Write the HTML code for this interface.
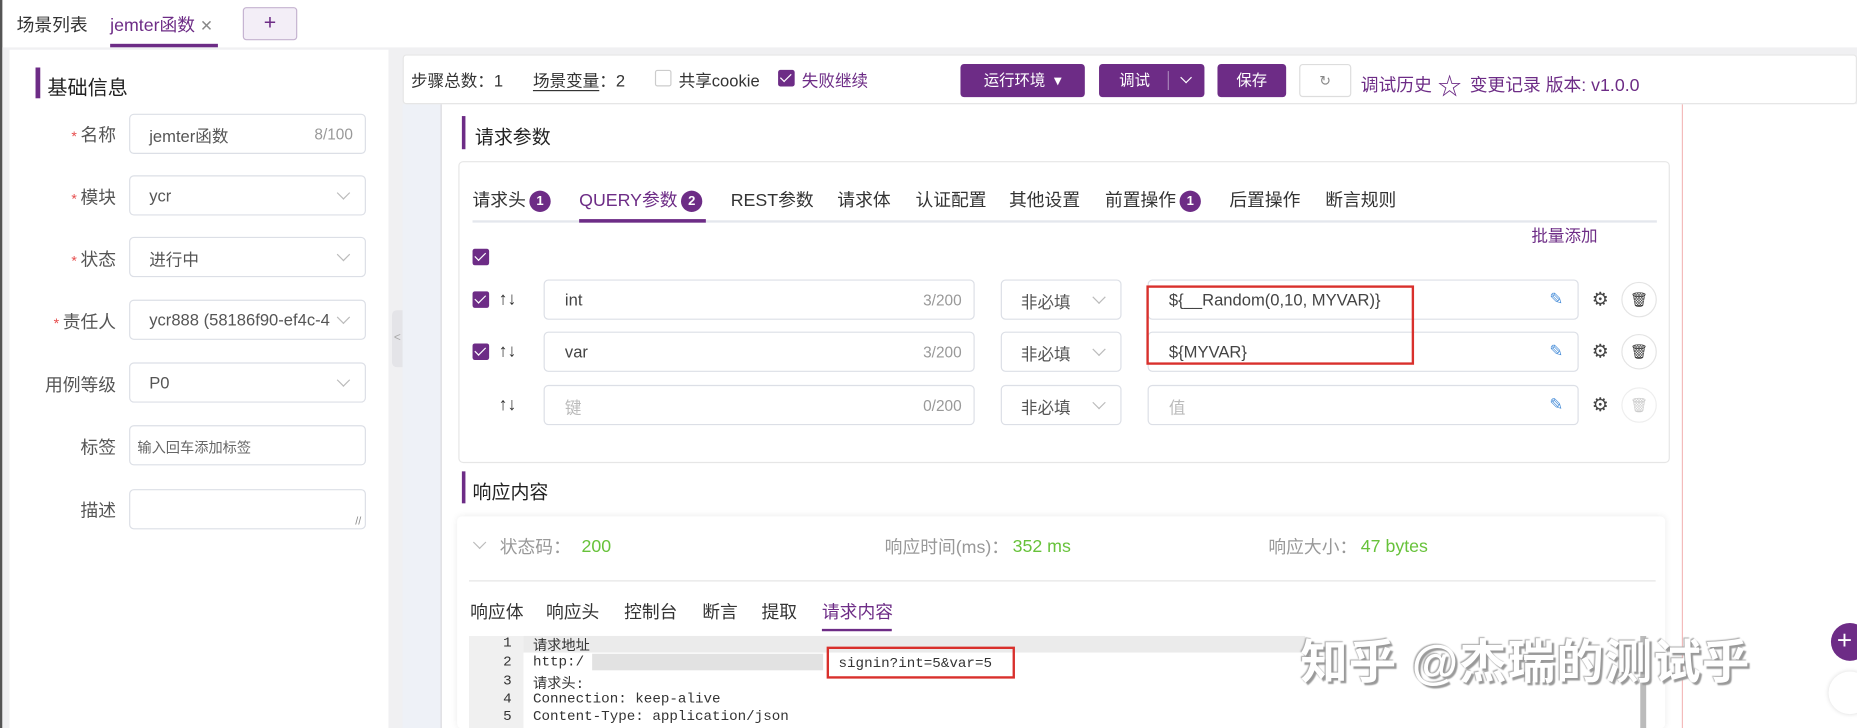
<!DOCTYPE html>
<html><head><meta charset="utf-8"><style>
*{box-sizing:border-box;margin:0;padding:0}
html,body{width:1857px;height:728px;overflow:hidden;background:#fff}
body{font-family:"Liberation Sans","Noto Sans CJK SC",sans-serif;color:#333}
#s{position:absolute;left:0;top:0;width:1568px;height:615px;transform:scale(1.18431);transform-origin:0 0;font-size:14px;overflow:hidden}
.a{position:absolute;white-space:nowrap}
.inp{position:absolute;border:1px solid #dcdfe6;border-radius:4px;background:#fff;height:34px}
.lbl{position:absolute;width:90px;text-align:right;left:8px;color:#555;font-size:15px}
.lbl b{color:#e64b4b;font-weight:normal;font-size:12px;margin-right:3px}
.chev{position:absolute;width:8px;height:8px;border-right:1px solid #bbb;border-bottom:1px solid #bbb;transform:rotate(45deg)}
.cb{position:absolute;width:14px;height:14px;border-radius:2px;background:#6d2c86}
.cb:after{content:"";position:absolute;left:4px;top:1px;width:4px;height:8px;border-right:1.5px solid #fff;border-bottom:1.5px solid #fff;transform:rotate(45deg)}
.btn{position:absolute;background:#6d2c86;color:#fff;border-radius:3px;height:28px;top:54px;font-size:13px;line-height:28px;text-align:center}
.badge{display:inline-block;width:18px;height:18px;border-radius:9px;background:#6d2c86;color:#fff;font-size:11px;line-height:18px;text-align:center;font-weight:bold;vertical-align:1px;margin-left:3px}
.tab{position:absolute;top:158px;font-size:15px;color:#333}
.code{position:absolute;font-family:"Liberation Mono","Noto Sans CJK SC",monospace;font-size:12px;left:450px}
.ln{position:absolute;left:396px;width:36px;text-align:right;font-family:"Liberation Mono",monospace;font-size:12px;color:#333}
</style></head><body><div id="s">
<div class="a" style="left:0;top:0;width:2px;height:615px;background:#555"></div>
<div class="a" style="left:14px;top:10px;font-size:15px;color:#333">场景列表</div>
<div class="a" style="left:93px;top:10px;font-size:15px;color:#6d2c86">jemter函数 <span style="color:#888;font-size:13px">✕</span></div>
<div class="a" style="left:93px;top:37px;width:91px;height:3px;background:#6d2c86"></div>
<div class="a" style="left:205px;top:6px;width:46px;height:28px;border:1px solid #c5b3d0;background:#f3eef7;border-radius:3px;text-align:center;line-height:25px;font-size:18px;color:#6d2c86">+</div>
<div class="a" style="left:2px;top:40px;width:1566px;height:575px;background:#f0f0f2"></div>
<div class="a" style="left:8px;top:42px;width:320px;height:573px;background:#fff"></div>
<div class="a" style="left:30px;top:57px;width:4px;height:26px;background:#6d2c86"></div>
<div class="a" style="left:40px;top:60px;font-size:17px;color:#222">基础信息</div>
<div class="lbl" style="top:103px"><b>*</b>名称</div>
<div class="inp" style="left:109px;top:96px;width:200px"><span class="a" style="left:16px;top:8px;color:#555">jemter函数</span><span class="a" style="right:10px;top:9px;color:#999;font-size:13px">8/100</span></div>
<div class="lbl" style="top:156px"><b>*</b>模块</div>
<div class="inp" style="left:109px;top:148px;width:200px"><span class="a" style="left:16px;top:8px;color:#555">ycr</span><i class="chev" style="right:14px;top:10px"></i></div>
<div class="lbl" style="top:208px"><b>*</b>状态</div>
<div class="inp" style="left:109px;top:200px;width:200px"><span class="a" style="left:16px;top:8px;color:#555">进行中</span><i class="chev" style="right:14px;top:10px"></i></div>
<div class="lbl" style="top:261px"><b>*</b>责任人</div>
<div class="inp" style="left:109px;top:253px;width:200px"><span class="a" style="left:16px;top:8px;color:#555">ycr888 (58186f90-ef4c-4</span><i class="chev" style="right:14px;top:10px"></i></div>
<div class="lbl" style="top:314px">用例等级</div>
<div class="inp" style="left:109px;top:306px;width:200px"><span class="a" style="left:16px;top:8px;color:#555">P0</span><i class="chev" style="right:14px;top:10px"></i></div>
<div class="lbl" style="top:367px">标签</div>
<div class="inp" style="left:109px;top:359px;width:200px"><span class="a" style="left:6px;top:9px;color:#666;font-size:12px">输入回车添加标签</span></div>
<div class="lbl" style="top:420px">描述</div>
<div class="inp" style="left:109px;top:413px;width:200px"><span class="a" style="right:3px;bottom:1px;color:#888;font-size:9px">//</span></div>
<div class="a" style="left:331px;top:262px;width:9px;height:48px;background:#e4e4e8;border-radius:4px 0 0 4px;color:#aaa;font-size:10px;line-height:48px;text-align:center">&lt;</div>
<div class="a" style="left:340px;top:88px;width:1228px;height:527px;background:#eef1f7"></div>
<div class="a" style="left:1420px;top:88px;width:148px;height:527px;background:#fff;border-left:1px solid #f3b4b4"></div>
<div class="a" style="left:372px;top:88px;width:1048px;height:527px;background:#fff;border-left:1px solid #d8d8dc"></div>
<div class="a" style="left:340px;top:46px;width:1228px;height:42px;background:#fff;border:1px solid #e6e6e6;border-radius:3px"></div>
<div class="a" style="left:347px;top:58px;font-size:14px">步骤总数：1</div>
<div class="a" style="left:450px;top:58px;font-size:14px"><span style="border-bottom:1px solid #333">场景变量</span>：2</div>
<div class="a" style="left:553px;top:59px;width:14px;height:14px;border:1px solid #ccc;border-radius:2px"></div>
<div class="a" style="left:573px;top:58px">共享cookie</div>
<div class="cb" style="left:657px;top:59px"></div>
<div class="a" style="left:677px;top:58px;color:#6d2c86">失败继续</div>
<div class="btn" style="left:811px;width:105px">运行环境 &nbsp;▾</div>
<div class="btn" style="left:928px;width:89px;text-align:left;padding-left:17px">调试<span style="position:absolute;left:58px;top:6px;height:16px;border-left:1px solid #a884b8"></span><i class="chev" style="left:70px;top:8px;border-color:#fff;width:7px;height:7px"></i></div>
<div class="btn" style="left:1028px;width:58px">保存</div>
<div class="a" style="left:1097px;top:54px;width:44px;height:28px;border:1px solid #ddd;border-radius:3px;text-align:center;line-height:26px;color:#888;font-size:12px">↻</div>
<div class="a" style="left:1149px;top:61px;font-size:15px;color:#6d2c86">调试历史</div>
<div class="a" style="left:1214px;top:57px;font-size:20px;color:#6d2c86">☆</div>
<div class="a" style="left:1241px;top:61px;font-size:15px;color:#6d2c86">变更记录 版本: v1.0.0</div>
<div class="a" style="left:390px;top:98px;width:3px;height:28px;background:#6d2c86"></div>
<div class="a" style="left:401px;top:102px;font-size:16px;color:#222">请求参数</div>
<div class="a" style="left:387px;top:136px;width:1023px;height:255px;border:1px solid #e6e6e6;border-radius:4px"></div>
<div class="tab" style="left:399px">请求头<span class="badge">1</span></div>
<div class="tab" style="left:489px;color:#6d2c86">QUERY参数<span class="badge">2</span></div>
<div class="tab" style="left:617px">REST参数</div>
<div class="tab" style="left:707px">请求体</div>
<div class="tab" style="left:773px">认证配置</div>
<div class="tab" style="left:852px">其他设置</div>
<div class="tab" style="left:933px">前置操作<span class="badge">1</span></div>
<div class="tab" style="left:1038px">后置操作</div>
<div class="tab" style="left:1119px">断言规则</div>
<div class="a" style="left:399px;top:186px;width:1000px;height:2px;background:#e4e7ed"></div>
<div class="a" style="left:489px;top:185px;width:107px;height:3px;background:#6d2c86"></div>
<div class="a" style="left:1293px;top:189px;color:#6d2c86;font-size:14px">批量添加</div>
<div class="cb" style="left:399px;top:210px"></div>
<div class="cb" style="left:399px;top:246px"></div>
<div class="a" style="left:421px;top:244px;font-size:15px">↑↓</div>
<div class="inp" style="left:459px;top:236px;width:364px"><span class="a" style="left:17px;top:8px;color:#444">int</span><span class="a" style="right:10px;top:9px;color:#999;font-size:13px">3/200</span></div>
<div class="inp" style="left:845px;top:236px;width:102px"><span class="a" style="left:16px;top:8px;color:#555">非必填</span><i class="chev" style="right:14px;top:10px"></i></div>
<div class="inp" style="left:969px;top:236px;width:364px"><span class="a" style="left:17px;top:8px;color:#444">${__Random(0,10, MYVAR)}</span><span class="a" style="right:12px;top:7px;color:#4a8fd9;font-size:14px">✎</span></div>
<div class="a" style="left:1344px;top:243px;font-size:16px;color:#444">⚙</div>
<div class="a" style="left:1369px;top:238px;width:30px;height:30px;border:1px solid #e4e4e4;border-radius:15px;text-align:center;line-height:28px;font-size:12px;color:#333">🗑</div>
<div class="cb" style="left:399px;top:290px"></div>
<div class="a" style="left:421px;top:288px;font-size:15px">↑↓</div>
<div class="inp" style="left:459px;top:280px;width:364px"><span class="a" style="left:17px;top:8px;color:#444">var</span><span class="a" style="right:10px;top:9px;color:#999;font-size:13px">3/200</span></div>
<div class="inp" style="left:845px;top:280px;width:102px"><span class="a" style="left:16px;top:8px;color:#555">非必填</span><i class="chev" style="right:14px;top:10px"></i></div>
<div class="inp" style="left:969px;top:280px;width:364px"><span class="a" style="left:17px;top:8px;color:#444">${MYVAR}</span><span class="a" style="right:12px;top:7px;color:#4a8fd9;font-size:14px">✎</span></div>
<div class="a" style="left:1344px;top:287px;font-size:16px;color:#444">⚙</div>
<div class="a" style="left:1369px;top:282px;width:30px;height:30px;border:1px solid #e4e4e4;border-radius:15px;text-align:center;line-height:28px;font-size:12px;color:#333">🗑</div>
<div class="a" style="left:421px;top:333px;font-size:15px">↑↓</div>
<div class="inp" style="left:459px;top:325px;width:364px"><span class="a" style="left:17px;top:8px;color:#bbb">键</span><span class="a" style="right:10px;top:9px;color:#999;font-size:13px">0/200</span></div>
<div class="inp" style="left:845px;top:325px;width:102px"><span class="a" style="left:16px;top:8px;color:#555">非必填</span><i class="chev" style="right:14px;top:10px"></i></div>
<div class="inp" style="left:969px;top:325px;width:364px"><span class="a" style="left:17px;top:8px;color:#bbb">值</span><span class="a" style="right:12px;top:7px;color:#4a8fd9;font-size:14px">✎</span></div>
<div class="a" style="left:1344px;top:332px;font-size:16px;color:#444">⚙</div>
<div class="a" style="left:1369px;top:327px;width:30px;height:30px;border:1px solid #eee;border-radius:15px;text-align:center;line-height:28px;font-size:12px;color:#ccc">🗑</div>
<div class="a" style="left:968px;top:241px;width:226px;height:67px;border:2px solid #d9302c"></div>
<div class="a" style="left:390px;top:398px;width:3px;height:27px;background:#6d2c86"></div>
<div class="a" style="left:399px;top:402px;font-size:16px;color:#222">响应内容</div>
<div class="a" style="left:386px;top:436px;width:1020px;height:179px;background:#fff;box-shadow:0 0 6px rgba(0,0,0,.08);border-radius:4px"></div>
<i class="chev" style="left:401px;top:454px"></i>
<div class="a" style="left:422px;top:451px;color:#999;font-size:15px">状态码：</div>
<div class="a" style="left:491px;top:453px;color:#67c23a;font-size:15px">200</div>
<div class="a" style="left:747px;top:451px;color:#999;font-size:15px">响应时间(ms)：</div>
<div class="a" style="left:855px;top:453px;color:#67c23a;font-size:15px">352 ms</div>
<div class="a" style="left:1071px;top:451px;color:#999;font-size:15px">响应大小：</div>
<div class="a" style="left:1149px;top:453px;color:#67c23a;font-size:15px">47 bytes</div>
<div class="a" style="left:396px;top:490px;width:1002px;height:1px;background:#e4e4e4"></div>
<div class="a" style="left:397px;top:506px;font-size:15px">响应体</div>
<div class="a" style="left:461px;top:506px;font-size:15px">响应头</div>
<div class="a" style="left:527px;top:506px;font-size:15px">控制台</div>
<div class="a" style="left:593px;top:506px;font-size:15px">断言</div>
<div class="a" style="left:643px;top:506px;font-size:15px">提取</div>
<div class="a" style="left:694px;top:506px;font-size:15px;color:#6d2c86">请求内容</div>
<div class="a" style="left:694px;top:531px;width:59px;height:2px;background:#6d2c86"></div>
<div class="a" style="left:396px;top:537px;width:46px;height:78px;background:#f0f0f0"></div>
<div class="a" style="left:442px;top:537px;width:660px;height:14px;background:#ebebeb"></div>
<div class="ln" style="top:536px">1</div><div class="ln" style="top:552px">2</div><div class="ln" style="top:568px">3</div><div class="ln" style="top:583px">4</div><div class="ln" style="top:598px">5</div>
<div class="code" style="top:536px">请求地址</div>
<div class="code" style="top:552px">http:/</div>
<div class="a" style="left:500px;top:552px;width:195px;height:14px;background:#e2e2e2"></div>
<div class="code" style="top:568px">请求头:</div>
<div class="code" style="top:583px">Connection: keep-alive</div>
<div class="code" style="top:598px">Content-Type: application/json</div>
<div class="a" style="left:698px;top:546px;width:159px;height:27px;border:2px solid #d9302c"></div>
<div class="code" style="left:708px;top:553px">signin?int=5&amp;var=5</div>
<div class="a" style="left:1385px;top:537px;width:5px;height:78px;background:#bbb"></div>
<div class="a" style="left:1098px;top:527px;font-size:40px;color:#fff;font-weight:bold;letter-spacing:1px;text-shadow:2px 2px 1px #999,-1px -1px 1px #aaa">知乎 @杰瑞的测试乎</div>
<div class="a" style="left:1546px;top:526px;width:32px;height:32px;border-radius:16px;background:#6d2c86;color:#fff;font-size:22px;line-height:30px;padding-left:5px">+</div>
<div class="a" style="left:1544px;top:567px;width:36px;height:36px;border-radius:18px;background:#fff;box-shadow:0 0 4px rgba(0,0,0,.15)"></div>
</div></body></html>
